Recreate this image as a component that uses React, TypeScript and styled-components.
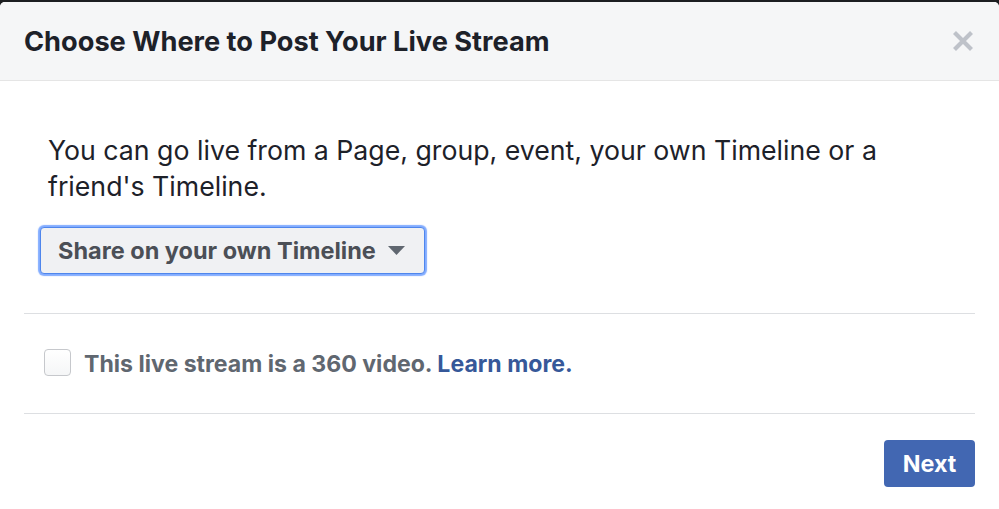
import React from "react";
import styled, { createGlobalStyle } from "styled-components";

const GlobalStyle = createGlobalStyle`
  html, body { margin: 0; padding: 0; background: #1c1e21; }
  body { font-family: Inter, "Liberation Sans", Arial, sans-serif; -webkit-font-smoothing: antialiased; }
  * { box-sizing: border-box; }
`;

const Dialog = styled.div`
  margin-top: 2px;
  height: 507px;
  background: #ffffff;
  border-radius: 5px 5px 0 0;
  overflow: hidden;
  display: flex;
  flex-direction: column;
`;

const Header = styled.div`
  height: 79px;
  flex: none;
  background: #f5f6f7;
  border-bottom: 1px solid #e5e5e5;
  display: flex;
  align-items: center;
  justify-content: space-between;
  padding: 0 25px 0 24px;
`;

const Title = styled.h1`
  margin: 0;
  font-size: 27.2px;
  font-weight: 700;
  color: #1d2129;
`;

const CloseButton = styled.button`
  border: 0;
  background: transparent;
  padding: 0;
  width: 22px;
  height: 22px;
  display: flex;
  align-items: center;
  justify-content: center;
  cursor: pointer;
`;

const Body = styled.div`
  padding: 0 24px;
  display: flex;
  flex-direction: column;
`;

const Intro = styled.p`
  margin: 51px 0 0 24px;
  font-size: 26.7px;
  line-height: 36px;
  color: #1d2129;
`;

const Dropdown = styled.button`
  align-self: flex-start;
  margin: 23px 0 0 16px;
  height: 47px;
  display: flex;
  align-items: center;
  gap: 12px;
  padding: 0 19px 0 17px;
  background: #f0f1f3;
  border: 1px solid #4f86ec;
  border-radius: 4px;
  box-shadow: 0 0 1px 2px rgba(88, 144, 255, 0.75);
  font-family: inherit;
  font-size: 23.5px;
  font-weight: 700;
  color: #4b4f56;
  cursor: pointer;
`;

const Divider = styled.hr<{ $top: number }>`
  margin: ${(p) => p.$top}px 0 0;
  border: 0;
  border-top: 1px solid #dddfe2;
  height: 0;
`;

const CheckRow = styled.label`
  height: 99px;
  display: flex;
  align-items: center;
  gap: 13px;
  padding-left: 20px;
  font-size: 23.1px;
  font-weight: 700;
  color: #606770;
`;

const Checkbox = styled.span`
  width: 27px;
  height: 27px;
  border: 1px solid #c6c8cc;
  border-radius: 4px;
  background: linear-gradient(#ffffff, #f5f6f7);
  flex: none;
  margin-top: -3px;
`;

const Link = styled.a`
  color: #365899;
  text-decoration: none;
`;

const Footer = styled.div`
  display: flex;
  justify-content: flex-end;
  padding: 26px 24px 0;
`;

const PrimaryButton = styled.button`
  width: 91px;
  height: 47px;
  border: 0;
  border-radius: 4px;
  background: #4267b2;
  color: #ffffff;
  font-family: inherit;
  font-size: 23.3px;
  font-weight: 700;
  cursor: pointer;
`;

export default function App() {
  return (
    <>
      <GlobalStyle />
      <Dialog>
        <Header>
          <Title>Choose Where to Post Your Live Stream</Title>
          <CloseButton aria-label="Close">
            <svg width="22" height="22" viewBox="0 0 22 22">
              <path d="M2.5 2.5 L19.5 19.5 M19.5 2.5 L2.5 19.5" stroke="#bec2c9" strokeWidth="4.2" strokeLinecap="butt" />
            </svg>
          </CloseButton>
        </Header>
        <Body>
          <Intro>
            You can go live from a Page, group, event, your own Timeline or a
            <br />
            friend's Timeline.
          </Intro>
          <Dropdown>
            Share on your own Timeline
            <svg width="17" height="9" viewBox="0 0 17 9">
              <path d="M0 0 H17 L8.5 9 Z" fill="#606770" />
            </svg>
          </Dropdown>
          <Divider $top={39} />
          <CheckRow>
            <Checkbox />
            <span>
              This live stream is a 360 video. <Link href="#">Learn more.</Link>
            </span>
          </CheckRow>
          <Divider $top={0} />
        </Body>
        <Footer>
          <PrimaryButton>Next</PrimaryButton>
        </Footer>
      </Dialog>
    </>
  );
}
